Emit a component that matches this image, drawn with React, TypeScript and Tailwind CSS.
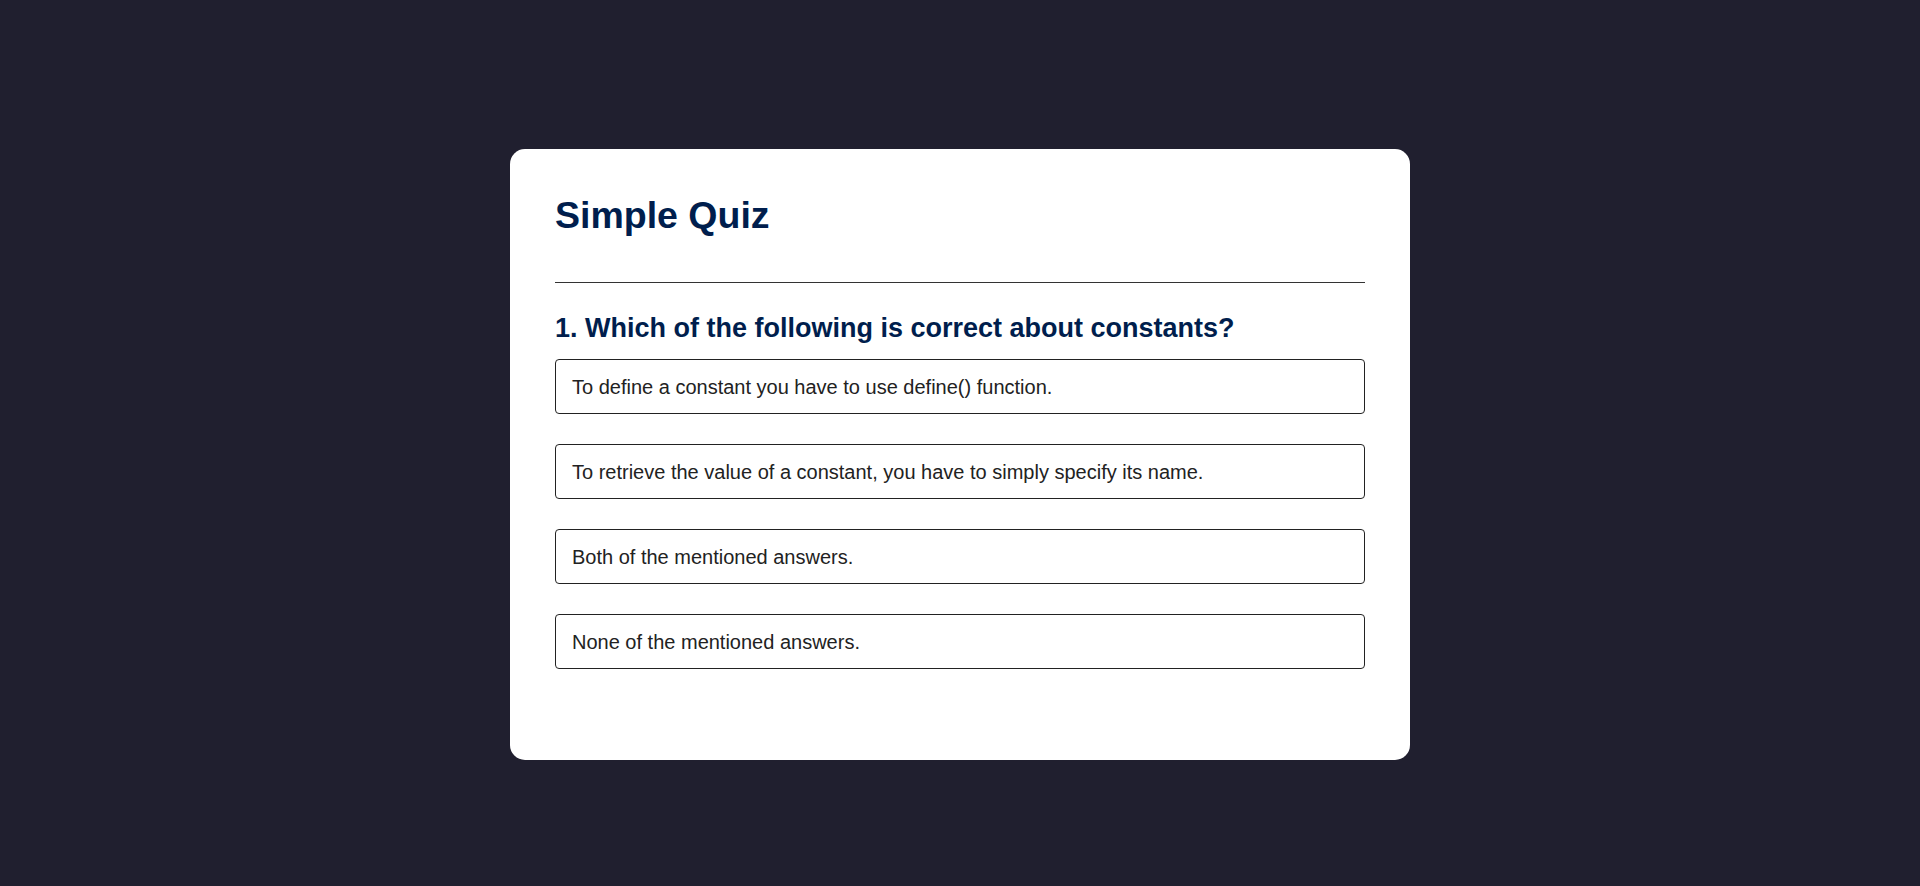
export default function App() {
  const options = [
    "To define a constant you have to use define() function.",
    "To retrieve the value of a constant, you have to simply specify its name.",
    "Both of the mentioned answers.",
    "None of the mentioned answers.",
  ];
  return (
    <div className="min-h-screen w-full bg-[#201f2f] pt-[149px] pb-[127px]" style={{ fontFamily: '"Liberation Sans", Arial, sans-serif' }}>
      <div className="mx-auto w-[900px] rounded-[15px] bg-white px-[45px] pt-[45px] pb-[91px]">
        <h1 className="text-[37.5px] font-bold leading-[1.15] text-[#001e4d]">Simple Quiz</h1>
        <div className="mt-[45px] border-b border-[#333]" />
        <h2 className="mt-[30px] text-[27px] font-bold leading-[1.15] text-[#001e4d]">
          1. Which of the following is correct about constants?
        </h2>
        <div className="mt-[15px] flex flex-col gap-[30px]">
          {options.map((o) => (
            <button
              key={o}
              className="h-[55px] w-full rounded-[4px] border border-[#222] bg-white px-[16px] text-left text-[20px] text-[#222]"
            >
              {o}
            </button>
          ))}
        </div>
      </div>
    </div>
  );
}
